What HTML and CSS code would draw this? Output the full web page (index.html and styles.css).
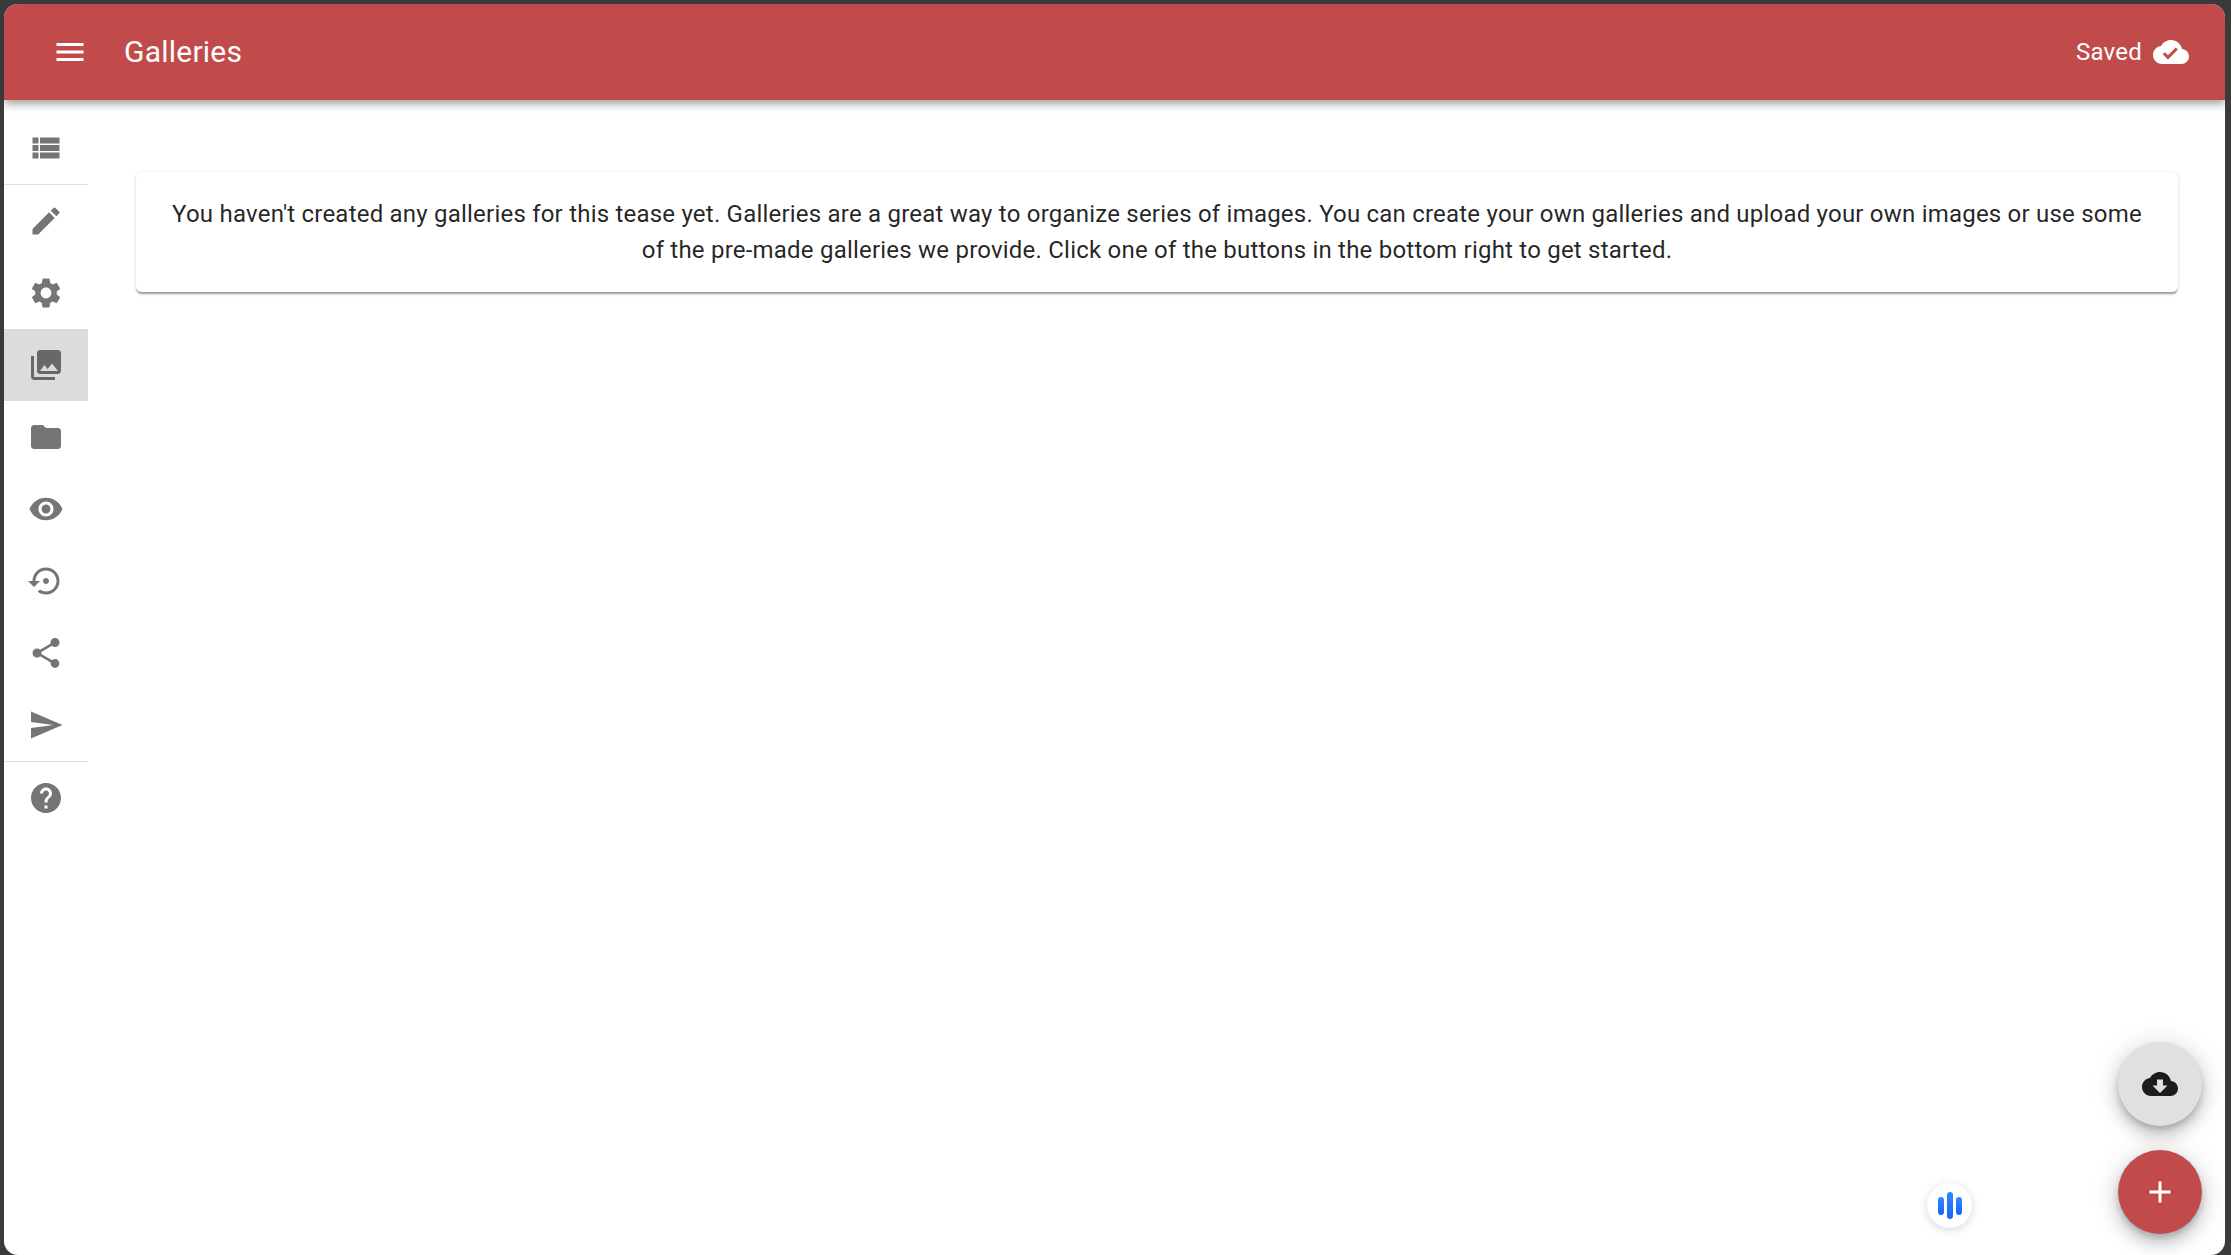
FILE: index.html
```html
<!DOCTYPE html>
<html lang="en">
<head>
<meta charset="utf-8">
<title>Galleries</title>
<link rel="stylesheet" href="styles.css">
</head>
<body>
<div class="app">
  <header class="topbar">
    <svg class="icon menu-icon" viewBox="0 0 24 24"><path d="M3 18h18v-2H3v2zm0-5h18v-2H3v2zm0-7v2h18V6H3z"/></svg>
    <h1 class="title">Galleries</h1>
    <div class="status">
      <span>Saved</span>
      <svg class="icon" viewBox="0 0 24 24"><path d="M19.35 10.04C18.67 6.59 15.64 4 12 4 9.11 4 6.6 5.64 5.35 8.04 2.34 8.36 0 10.91 0 14c0 3.31 2.69 6 6 6h13c2.76 0 5-2.24 5-5 0-2.64-2.05-4.78-4.65-4.96zM10 17l-3.5-3.5 1.41-1.41L10 14.17 15.18 9l1.41 1.41L10 17z"/></svg>
    </div>
  </header>
  <div class="body">
    <nav class="sidebar">
      <div class="nav-item"><svg class="icon" viewBox="0 0 24 24"><path d="M3 14h4v-4H3v4zm0 5h4v-4H3v4zM3 9h4V5H3v4zm5 5h13v-4H8v4zm0 5h13v-4H8v4zM8 5v4h13V5H8z"/></svg></div>
      <div class="divider"></div>
      <div class="nav-item"><svg class="icon" viewBox="0 0 24 24"><path d="M3 17.25V21h3.75L17.81 9.94l-3.75-3.75L3 17.25zM20.71 7.04c.39-.39.39-1.02 0-1.41l-2.34-2.34a.9959.9959 0 00-1.41 0l-1.83 1.83 3.75 3.75 1.83-1.83z"/></svg></div>
      <div class="nav-item"><svg class="icon" viewBox="0 0 24 24"><path d="M19.14 12.94c.04-.3.06-.61.06-.94 0-.32-.02-.64-.07-.94l2.03-1.58c.18-.14.23-.41.12-.61l-1.92-3.32c-.12-.22-.37-.29-.59-.22l-2.39.96c-.5-.38-1.03-.7-1.62-.94l-.36-2.54c-.04-.24-.24-.41-.48-.41h-3.84c-.24 0-.43.17-.47.41l-.36 2.54c-.59.24-1.13.57-1.62.94l-2.39-.96c-.22-.08-.47 0-.59.22L2.74 8.87c-.12.21-.08.47.12.61l2.03 1.58c-.05.3-.09.63-.09.94s.02.64.07.94l-2.03 1.58c-.18.14-.23.41-.12.61l1.92 3.32c.12.22.37.29.59.22l2.39-.96c.5.38 1.03.7 1.62.94l.36 2.54c.05.24.24.41.48.41h3.84c.24 0 .44-.17.47-.41l.36-2.54c.59-.24 1.13-.56 1.62-.94l2.39.96c.22.08.47 0 .59-.22l1.92-3.32c.12-.22.07-.47-.12-.61l-2.01-1.58zM12 15.6c-1.98 0-3.6-1.62-3.6-3.6s1.62-3.6 3.6-3.6 3.6 1.62 3.6 3.6-1.62 3.6-3.6 3.6z"/></svg></div>
      <div class="nav-item selected"><svg class="icon" viewBox="0 0 24 24"><path d="M22 16V4c0-1.1-.9-2-2-2H8c-1.1 0-2 .9-2 2v12c0 1.1.9 2 2 2h12c1.1 0 2-.9 2-2zm-11-4l2.03 2.71L16 11l4 5H8l3-4zM2 6v14c0 1.1.9 2 2 2h14v-2H4V6H2z"/></svg></div>
      <div class="nav-item"><svg class="icon" viewBox="0 0 24 24"><path d="M10 4H4c-1.1 0-1.99.9-1.99 2L2 18c0 1.1.9 2 2 2h16c1.1 0 2-.9 2-2V8c0-1.1-.9-2-2-2h-8l-2-2z"/></svg></div>
      <div class="nav-item"><svg class="icon" viewBox="0 0 24 24"><path d="M12 4.5C7 4.5 2.73 7.61 1 12c1.73 4.39 6 7.5 11 7.5s9.27-3.11 11-7.5c-1.73-4.39-6-7.5-11-7.5zM12 17c-2.76 0-5-2.24-5-5s2.24-5 5-5 5 2.24 5 5-2.24 5-5 5zm0-8c-1.66 0-3 1.34-3 3s1.34 3 3 3 3-1.34 3-3-1.34-3-3-3z"/></svg></div>
      <div class="nav-item"><svg class="icon" viewBox="0 0 24 24"><path d="M14 12c0-1.1-.9-2-2-2s-2 .9-2 2 .9 2 2 2 2-.9 2-2zm-2-9c-4.97 0-9 4.03-9 9H0l4 4 4-4H5c0-3.87 3.13-7 7-7s7 3.13 7 7-3.13 7-7 7c-1.51 0-2.91-.49-4.06-1.3l-1.42 1.44C8.04 20.3 9.94 21 12 21c4.97 0 9-4.03 9-9s-4.03-9-9-9z"/></svg></div>
      <div class="nav-item"><svg class="icon" viewBox="0 0 24 24"><path d="M18 16.08c-.76 0-1.44.3-1.96.77L8.91 12.7c.05-.23.09-.46.09-.7s-.04-.47-.09-.7l7.05-4.11c.54.5 1.25.81 2.04.81 1.66 0 3-1.34 3-3s-1.34-3-3-3-3 1.34-3 3c0 .24.04.47.09.7L8.04 9.81C7.5 9.31 6.79 9 6 9c-1.66 0-3 1.34-3 3s1.34 3 3 3c.79 0 1.5-.31 2.04-.81l7.12 4.16c-.05.21-.08.43-.08.65 0 1.61 1.31 2.92 2.92 2.92 1.61 0 2.92-1.31 2.92-2.92s-1.31-2.92-2.92-2.92z"/></svg></div>
      <div class="nav-item"><svg class="icon" viewBox="0 0 24 24"><path d="M2.01 21L23 12 2.01 3 2 10l15 2-15 2z"/></svg></div>
      <div class="divider"></div>
      <div class="nav-item"><svg class="icon" viewBox="0 0 24 24"><path d="M12 2C6.48 2 2 6.48 2 12s4.48 10 10 10 10-4.48 10-10S17.52 2 12 2zm1 17h-2v-2h2v2zm2.07-7.75l-.9.92C13.45 12.9 13 13.5 13 15h-2v-.5c0-1.1.45-2.1 1.17-2.83l1.24-1.26c.37-.36.59-.86.59-1.41 0-1.1-.9-2-2-2s-2 .9-2 2H8c0-2.21 1.79-4 4-4s4 1.79 4 4c0 .88-.36 1.68-.93 2.25z"/></svg></div>
    </nav>
    <main class="content">
      <div class="card">You haven't created any galleries for this tease yet. Galleries are a great way to organize series of images. You can create your own galleries and upload your own images or use some of the pre-made galleries we provide. Click one of the buttons in the bottom right to get started.</div>
    </main>
  </div>
  <div class="fab fab-grey"><svg class="icon" viewBox="0 0 24 24"><path d="M19.35 10.04C18.67 6.59 15.64 4 12 4 9.11 4 6.6 5.64 5.35 8.04 2.34 8.36 0 10.91 0 14c0 3.31 2.69 6 6 6h13c2.76 0 5-2.24 5-5 0-2.64-2.05-4.78-4.65-4.96zM17 13l-5 5-5-5h3V9h4v4h3z"/></svg></div>
  <div class="fab fab-red"><svg class="icon" viewBox="0 0 24 24"><path d="M19 13h-6v6h-2v-6H5v-2h6V5h2v6h6v2z"/></svg></div>
  <div class="voice"><span class="bar"></span><span class="bar bar-tall"></span><span class="bar"></span></div>
</div>
</body>
</html>
```
FILE: styles.css
```css
* { box-sizing: border-box; }
html, body { height: 100%; }
body {
  margin: 0;
  padding: 4px 6px 0 4px;
  background: #3a3a3a;
  font-family: Roboto, "Liberation Sans", sans-serif;
  overflow: hidden;
}
.app {
  position: relative;
  display: flex;
  flex-direction: column;
  height: 100%;
  background: #fff;
  border-radius: 14px;
  overflow: hidden;
}
.icon { display: block; width: 36px; height: 36px; fill: currentColor; flex: none; }
.topbar {
  position: relative;
  z-index: 2;
  display: flex;
  align-items: center;
  flex: none;
  height: 96px;
  padding: 0 36px 0 48px;
  background: #c14b4b;
  color: #fff;
  box-shadow: 0 3px 6px -1.5px rgba(0,0,0,.2), 0 6px 7.5px 0 rgba(0,0,0,.14), 0 1.5px 15px 0 rgba(0,0,0,.12);
}
.title {
  margin: 0 0 0 36px;
  font-size: 30px;
  font-weight: 400;
  line-height: 1.6;
  letter-spacing: .0075em;
}
.status {
  display: flex;
  align-items: center;
  gap: 11px;
  margin-left: auto;
  font-size: 24px;
  letter-spacing: .00938em;
}
.body { display: flex; flex: 1; min-height: 0; }
.sidebar {
  flex: none;
  width: 84px;
  padding-top: 12px;
  color: #757575;
}
.nav-item {
  display: flex;
  align-items: center;
  justify-content: center;
  height: 72px;
}
.nav-item.selected { background: #dcdcdc; color: #686868; }
.divider { height: 1px; background: #e0e0e0; }
.content { flex: 1; min-width: 0; padding: 72px 47px 0 48px; }
.card {
  padding: 24px;
  background: #fff;
  border-radius: 6px;
  color: rgba(0,0,0,.87);
  font-size: 24px;
  line-height: 1.5;
  letter-spacing: .215px;
  text-align: center;
  box-shadow: 0 3px 1.5px -1.5px rgba(0,0,0,.2), 0 1.5px 1.5px 0 rgba(0,0,0,.14), 0 1.5px 4.5px 0 rgba(0,0,0,.12);
}
.fab {
  position: absolute;
  right: 23px;
  display: flex;
  align-items: center;
  justify-content: center;
  width: 84px;
  height: 84px;
  border-radius: 50%;
  box-shadow: 0 4.5px 7.5px -1.5px rgba(0,0,0,.2), 0 9px 15px 1.5px rgba(0,0,0,.14), 0 3px 27px 3px rgba(0,0,0,.12);
}
.fab-grey { bottom: 129px; background: #e0e0e0; color: #1c1c1c; }
.fab-red { bottom: 21px; background: #c14b4b; color: #fff; }
.voice {
  position: absolute;
  right: 253px;
  bottom: 27px;
  display: flex;
  align-items: center;
  justify-content: center;
  gap: 3px;
  width: 45px;
  height: 45px;
  border-radius: 50%;
  background: #fff;
  box-shadow: 0 2px 10px rgba(0,0,0,.16);
}
.bar {
  width: 6px;
  height: 18px;
  border-radius: 3px;
  background: linear-gradient(#2f88ff, #1a66f5);
}
.bar-tall { height: 27px; }
```
